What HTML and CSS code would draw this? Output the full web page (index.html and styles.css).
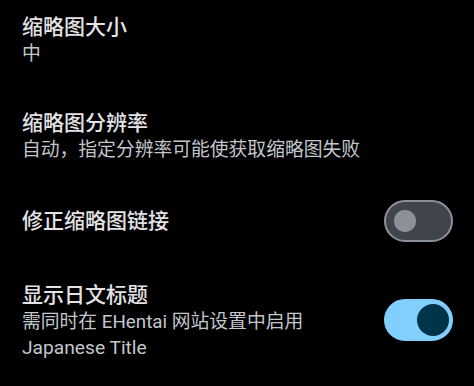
FILE: index.html
```html
<!DOCTYPE html>
<html lang="zh-CN">
<head>
<meta charset="utf-8">
<link rel="stylesheet" href="styles.css">
</head>
<body>
<div class="list">
  <div class="row first">
    <div class="text">
      <div class="title">缩略图大小</div>
      <div class="sub">中</div>
    </div>
  </div>
  <div class="row">
    <div class="text">
      <div class="title">缩略图分辨率</div>
      <div class="sub">自动，指定分辨率可能使获取缩略图失败</div>
    </div>
  </div>
  <div class="row">
    <div class="text">
      <div class="title">修正缩略图链接</div>
    </div>
    <div class="switch off"><div class="thumb"></div></div>
  </div>
  <div class="row">
    <div class="text">
      <div class="title">显示日文标题</div>
      <div class="sub">需同时在 EHentai 网站设置中启用<br><span class="latin">Japanese Title</span></div>
    </div>
    <div class="switch on"><div class="thumb"></div></div>
  </div>
</div>
</body>
</html>
```
FILE: styles.css
```css
html, body {
  margin: 0;
  padding: 0;
  background: #000;
}
body {
  width: 474px;
  height: 386px;
  overflow: hidden;
  font-family: "Roboto", "Noto Sans CJK SC", sans-serif;
}
.list {
  display: flex;
  flex-direction: column;
}
.row {
  display: flex;
  align-items: center;
  justify-content: space-between;
  padding: 20.5px 21px 20.5px 22px;
}
.row.first {
  padding-top: 11.5px;
}
.text {
  display: flex;
  flex-direction: column;
}
.title {
  font-size: 21px;
  line-height: 30px;
  font-weight: 500;
  color: #e3e3e6;
}
.sub {
  font-size: 18.8px;
  line-height: 25px;
  color: #c3c7cc;
}
.latin {
  font-size: 19.2px;
}
.switch {
  box-sizing: border-box;
  width: 69px;
  height: 42.6px;
  border-radius: 22px;
  border: 2.5px solid #8c9199;
  display: flex;
  align-items: center;
  margin: -3.8px 0;
}
.switch.off {
  background: #40454c;
  padding-left: 8.2px;
}
.switch.off .thumb {
  width: 21.6px;
  height: 21.6px;
  border-radius: 50%;
  background: #8c9199;
}
.switch.on {
  background: #80cfff;
  border-color: #80cfff;
  justify-content: flex-end;
  padding-right: 2.5px;
  margin: 0;
}
.switch.on .thumb {
  width: 32px;
  height: 32px;
  border-radius: 50%;
  background: #00344b;
}
```
